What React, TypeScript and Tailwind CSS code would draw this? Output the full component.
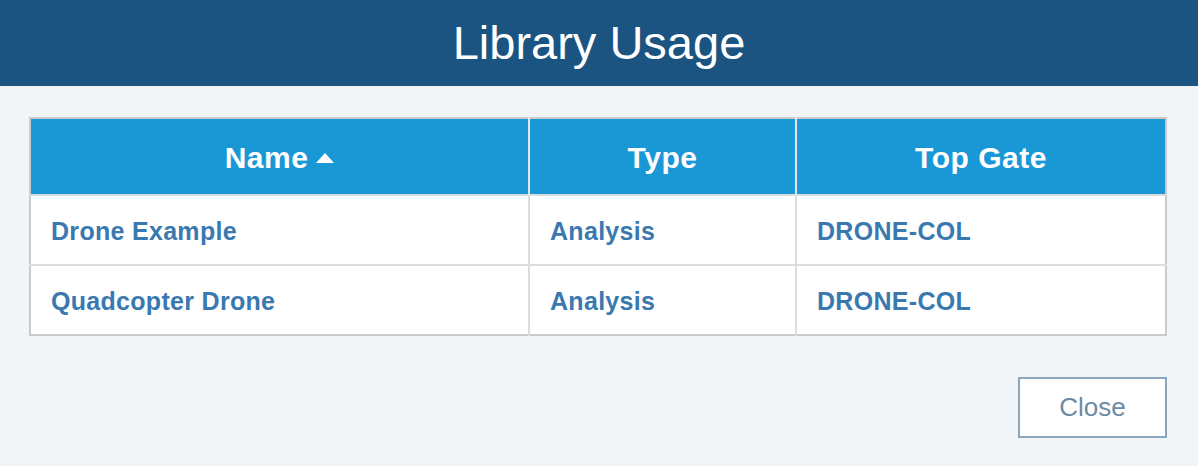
import { useState } from "react";

type Row = { name: string; type: string; topGate: string };

const rows: Row[] = [
  { name: "Drone Example", type: "Analysis", topGate: "DRONE-COL" },
  { name: "Quadcopter Drone", type: "Analysis", topGate: "DRONE-COL" },
];

export default function App() {
  const [asc, setAsc] = useState(true);
  const sorted = [...rows].sort((a, b) => (asc ? a.name.localeCompare(b.name) : b.name.localeCompare(a.name)));

  return (
    <div className="w-[1198px] h-[466px] bg-[#f2f5f8] font-['Liberation_Sans',Arial,sans-serif] flex flex-col">
      {/* Modal header */}
      <div className="h-[86px] bg-[#1b5381] flex items-center justify-center">
        <h1 className="text-white text-[47px] font-light">Library Usage</h1>
      </div>

      <div className="flex flex-col pt-[31px] pl-[29px] pr-[31px]">
        {/* Usage table */}
        <table className="w-full border-collapse border-2 border-[#cacaca] table-fixed">
          <colgroup>
            <col className="w-[499px]" />
            <col className="w-[267px]" />
            <col />
          </colgroup>
          <thead>
            <tr className="h-[77px] bg-[#1a98d6] text-white text-[30px] font-bold tracking-[0.5px]">
              <th className="pt-[2px] border-r-2 border-[#e0e6ea] cursor-pointer" onClick={() => setAsc(!asc)}>
                <span className="inline-flex items-center gap-[8px]">
                  Name
                  <svg width="18" height="10" viewBox="0 0 18 10" className={asc ? "" : "rotate-180"}>
                    <path d="M9 0 L18 10 L0 10 Z" fill="white" />
                  </svg>
                </span>
              </th>
              <th className="pt-[2px] border-r-2 border-[#e0e6ea]">Type</th>
              <th className="pt-[2px]">Top Gate</th>
            </tr>
          </thead>
          <tbody>
            {sorted.map((row) => (
              <tr
                key={row.name}
                className="h-[70px] bg-white border-t-2 border-[#dcdcdc] text-[#3a79b0] text-[25px] font-bold tracking-[0.3px]"
              >
                <td className="px-[20px] pt-[4px] border-r-2 border-[#dcdcdc]">{row.name}</td>
                <td className="px-[20px] pt-[4px] border-r-2 border-[#dcdcdc]">{row.type}</td>
                <td className="px-[20px] pt-[4px]">{row.topGate}</td>
              </tr>
            ))}
          </tbody>
        </table>

        {/* Footer */}
        <div className="flex justify-end pt-[41px]">
          <button className="w-[149px] h-[61px] bg-white border-2 border-[#8ca7bd] text-[#6d8aa4] text-[26px]">
            Close
          </button>
        </div>
      </div>
    </div>
  );
}
